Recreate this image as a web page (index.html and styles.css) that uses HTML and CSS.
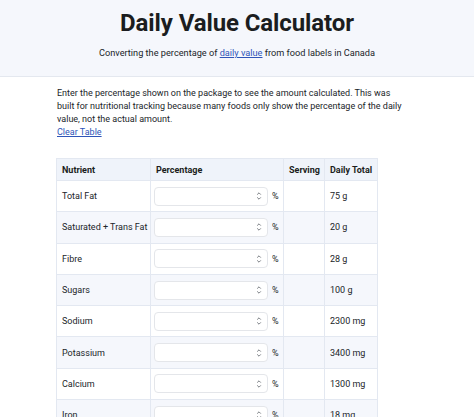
FILE: index.html
```html
<!DOCTYPE html>
<html lang="en">
<head>
<meta charset="utf-8">
<title>Daily Value Calculator</title>
<link rel="stylesheet" href="styles.css">
</head>
<body>
<header class="hero">
  <h1 class="title">Daily Value Calculator</h1>
  <p class="subtitle">Converting the percentage of <a href="#">daily value</a> from food labels in Canada</p>
</header>
<main class="container">
  <p class="intro">Enter the percentage shown on the package to see the amount calculated. This was built for nutritional tracking because many foods only show the percentage of the daily value, not the actual amount.<br><a href="#">Clear Table</a></p>
  <table class="dv">
    <thead>
      <tr><th class="c-nut">Nutrient</th><th class="c-pct">Percentage</th><th class="c-srv">Serving</th><th class="c-tot">Daily Total</th></tr>
    </thead>
    <tbody>
      <tr><td>Total Fat</td><td class="pcell"><div class="pct"><span class="box"><input type="text"><svg class="spin" viewBox="0 0 6 10" width="6" height="10"><path d="M1.2 3.6 L3 1.8 L4.8 3.6 M1.2 6.4 L3 8.2 L4.8 6.4" fill="none" stroke="#6b6f75" stroke-width="0.9"/></svg></span><span class="sym">%</span></div></td><td></td><td>75 g</td></tr>
      <tr><td>Saturated + Trans Fat</td><td class="pcell"><div class="pct"><span class="box"><input type="text"><svg class="spin" viewBox="0 0 6 10" width="6" height="10"><path d="M1.2 3.6 L3 1.8 L4.8 3.6 M1.2 6.4 L3 8.2 L4.8 6.4" fill="none" stroke="#6b6f75" stroke-width="0.9"/></svg></span><span class="sym">%</span></div></td><td></td><td>20 g</td></tr>
      <tr><td>Fibre</td><td class="pcell"><div class="pct"><span class="box"><input type="text"><svg class="spin" viewBox="0 0 6 10" width="6" height="10"><path d="M1.2 3.6 L3 1.8 L4.8 3.6 M1.2 6.4 L3 8.2 L4.8 6.4" fill="none" stroke="#6b6f75" stroke-width="0.9"/></svg></span><span class="sym">%</span></div></td><td></td><td>28 g</td></tr>
      <tr><td>Sugars</td><td class="pcell"><div class="pct"><span class="box"><input type="text"><svg class="spin" viewBox="0 0 6 10" width="6" height="10"><path d="M1.2 3.6 L3 1.8 L4.8 3.6 M1.2 6.4 L3 8.2 L4.8 6.4" fill="none" stroke="#6b6f75" stroke-width="0.9"/></svg></span><span class="sym">%</span></div></td><td></td><td>100 g</td></tr>
      <tr><td>Sodium</td><td class="pcell"><div class="pct"><span class="box"><input type="text"><svg class="spin" viewBox="0 0 6 10" width="6" height="10"><path d="M1.2 3.6 L3 1.8 L4.8 3.6 M1.2 6.4 L3 8.2 L4.8 6.4" fill="none" stroke="#6b6f75" stroke-width="0.9"/></svg></span><span class="sym">%</span></div></td><td></td><td>2300 mg</td></tr>
      <tr><td>Potassium</td><td class="pcell"><div class="pct"><span class="box"><input type="text"><svg class="spin" viewBox="0 0 6 10" width="6" height="10"><path d="M1.2 3.6 L3 1.8 L4.8 3.6 M1.2 6.4 L3 8.2 L4.8 6.4" fill="none" stroke="#6b6f75" stroke-width="0.9"/></svg></span><span class="sym">%</span></div></td><td></td><td>3400 mg</td></tr>
      <tr><td>Calcium</td><td class="pcell"><div class="pct"><span class="box"><input type="text"><svg class="spin" viewBox="0 0 6 10" width="6" height="10"><path d="M1.2 3.6 L3 1.8 L4.8 3.6 M1.2 6.4 L3 8.2 L4.8 6.4" fill="none" stroke="#6b6f75" stroke-width="0.9"/></svg></span><span class="sym">%</span></div></td><td></td><td>1300 mg</td></tr>
      <tr><td>Iron</td><td class="pcell"><div class="pct"><span class="box"><input type="text"><svg class="spin" viewBox="0 0 6 10" width="6" height="10"><path d="M1.2 3.6 L3 1.8 L4.8 3.6 M1.2 6.4 L3 8.2 L4.8 6.4" fill="none" stroke="#6b6f75" stroke-width="0.9"/></svg></span><span class="sym">%</span></div></td><td></td><td>18 mg</td></tr>
    </tbody>
  </table>
</main>
</body>
</html>
```

FILE: styles.css
```css
html, body {
  margin: 0;
  padding: 0;
  background: #ffffff;
}
body {
  font-family: Roboto, "Liberation Sans", Arial, sans-serif;
  color: #212529;
  font-size: 9px;
}
a {
  color: #2f55b8;
  text-decoration: underline;
}
.hero {
  background: #f5f7fc;
  border-bottom: 1px solid #e4e8ef;
  height: 75px;
  box-sizing: content-box;
  text-align: center;
  padding-top: 1px;
}
.title {
  margin: 7px 0 0;
  font-size: 24px;
  line-height: 30px;
  font-weight: 700;
  letter-spacing: -0.1px;
  color: #1b1d20;
}
.subtitle {
  margin: 9px 0 0;
  font-size: 9.2px;
  line-height: 12px;
}
.container {
  width: 360px;
  margin: 0 auto;
}
.intro {
  max-width: 346px;
  margin: 10px 0 0;
  line-height: 13px;
}
.dv {
  margin-top: 19px;
  border-collapse: collapse;
  table-layout: fixed;
  width: 321px;
  margin-left: -1px;
}
.dv th, .dv td {
  box-sizing: border-box;
  border: 1px solid #e3e8f1;
  padding: 0 5px;
  text-align: left;
  vertical-align: middle;
  white-space: nowrap;
}
.dv th {
  height: 22px;
  font-weight: 700;
  background: #eff3fa;
  color: #1b1d20;
}
.dv td {
  height: 31.3px;
}
.dv tbody tr:nth-child(even) td {
  background: #f5f7fc;
}
.c-nut { width: 94px; }
.c-pct { width: 133px; }
.c-srv { width: 41px; }
.c-tot { width: 53px; }
.dv td.pcell {
  padding-left: 3px;
  padding-right: 0;
}
.pct {
  display: flex;
  align-items: center;
  gap: 4px;
}
.box {
  display: flex;
  align-items: center;
  width: 107px;
  height: 17px;
  border: 1px solid #e4e6ea;
  border-radius: 4px;
  background: #ffffff;
  padding-right: 5px;
  box-sizing: content-box;
}
.box input {
  flex: 1;
  min-width: 0;
  border: 0;
  outline: 0;
  background: transparent;
  height: 15px;
  padding: 0 4px;
  font: inherit;
}
.spin {
  display: block;
  flex: none;
}
.sym {
  font-size: 9px;
}
```
